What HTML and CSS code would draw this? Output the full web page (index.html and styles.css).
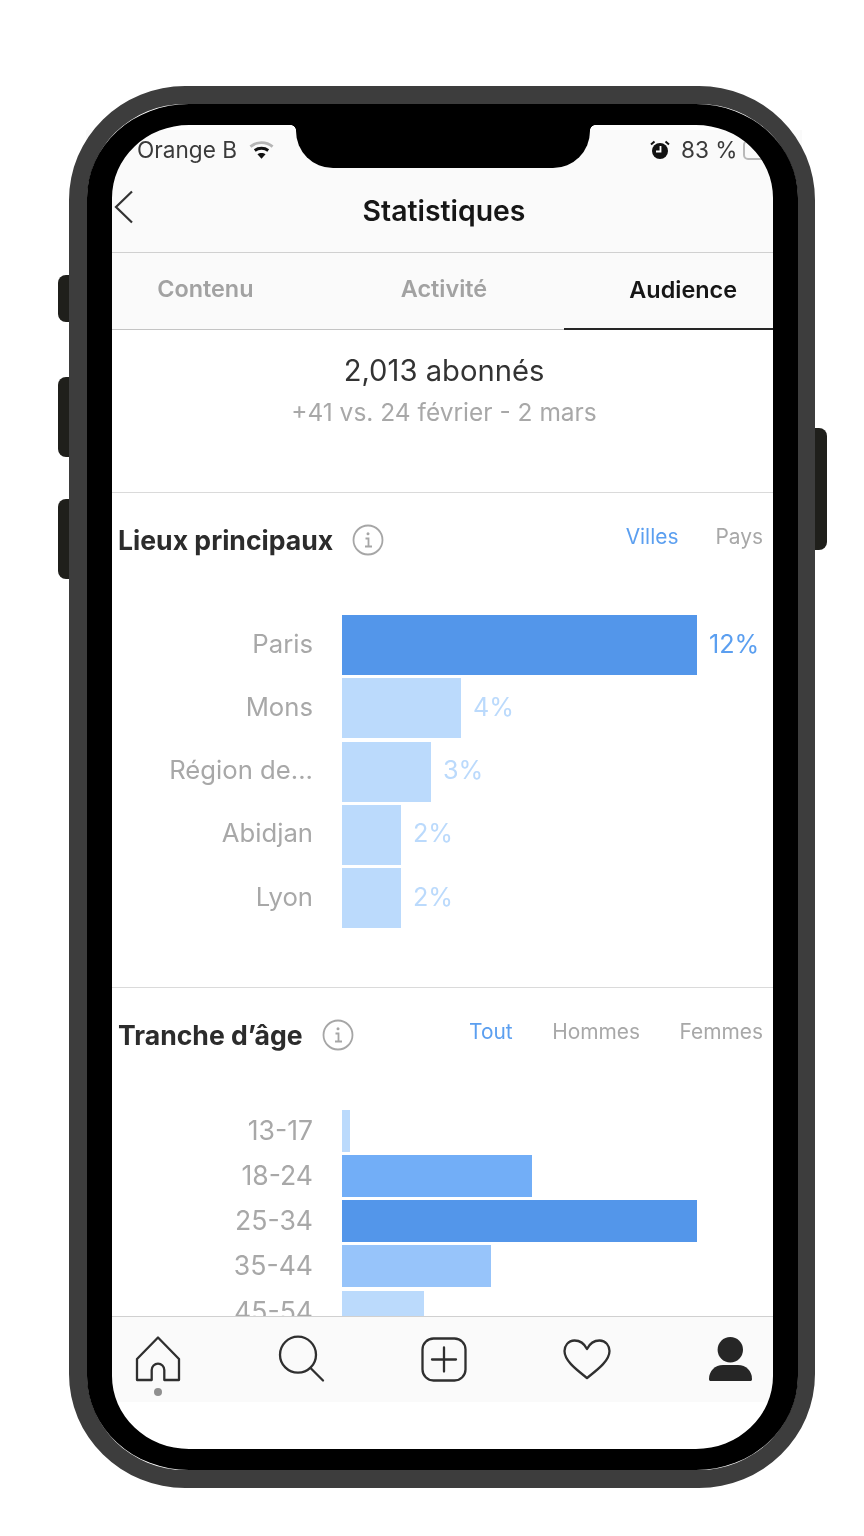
FILE: index.html
```html
<!DOCTYPE html>
<html lang="fr">
<head>
<meta charset="utf-8">
<title>Statistiques</title>
<link rel="stylesheet" href="styles.css">
</head>
<body>
<div class="stage">
  <main class="shot">
    <div class="status">
      <span class="carrier">Orange B</span>
      <svg class="wifi" viewBox="0 0 26 20"><path class="wifi-off" d="M1.500 6.500C8 1 18 1 24.500 6.500"/><path class="wifi-on" d="M6 10.500C10 7.500 16 7.500 20 10.500"/><path class="wifi-dot" d="M13 19L8.800 14.500C11 12.700 15 12.700 17.200 14.500Z"/></svg>
      <span class="status-gap"></span>
      <svg class="alarm" viewBox="0 0 20 20"><path class="alarm-ear" d="M1 4.500L4.500 1.500M19 4.500L15.500 1.500"/><circle cx="10" cy="11" r="8"/><path class="alarm-hand" d="M10.500 6V11.500H6"/></svg>
      <span class="battery-text">83 %</span>
      <span class="battery"></span>
    </div>
    <header class="nav">
      <svg class="back" viewBox="0 0 20 34"><path d="M18 1.500L2 17L18 32.500"/></svg>
      <h1 class="title">Statistiques</h1>
    </header>
    <nav class="tabs">
      <span class="tab">Contenu</span>
      <span class="tab">Activité</span>
      <span class="tab tab-active">Audience</span>
    </nav>
    <div class="scroll">
      <section class="summary">
        <p class="summary-main">2,013 abonnés</p>
        <p class="summary-sub">+41 vs. 24 février - 2 mars</p>
      </section>
      <section class="block block-places">
        <div class="block-head">
          <h2 class="block-title">Lieux principaux</h2>
          <svg class="info" viewBox="0 0 32 32"><circle cx="16" cy="16" r="14.500"/><path d="M13.500 14.500H16.500V22.500M13 22.500H20"/><circle class="info-dot" cx="16" cy="9.800" r="1.500"/></svg>
          <div class="filters">
            <span class="filter filter-on">Villes</span>
            <span class="filter">Pays</span>
          </div>
        </div>
        <div class="chart chart-places">
          <div class="row"><span class="label">Paris</span><span class="bar c-dark" style="width:355px"></span><span class="value v-dark">12%</span></div>
          <div class="row"><span class="label">Mons</span><span class="bar c-light" style="width:119px"></span><span class="value">4%</span></div>
          <div class="row"><span class="label">Région de...</span><span class="bar c-light" style="width:89px"></span><span class="value">3%</span></div>
          <div class="row"><span class="label">Abidjan</span><span class="bar c-light" style="width:59px"></span><span class="value">2%</span></div>
          <div class="row"><span class="label">Lyon</span><span class="bar c-light" style="width:59px"></span><span class="value">2%</span></div>
        </div>
      </section>
      <section class="block block-age">
        <div class="block-head">
          <h2 class="block-title">Tranche d’âge</h2>
          <svg class="info" viewBox="0 0 32 32"><circle cx="16" cy="16" r="14.500"/><path d="M13.500 14.500H16.500V22.500M13 22.500H20"/><circle class="info-dot" cx="16" cy="9.800" r="1.500"/></svg>
          <div class="filters filters-wide">
            <span class="filter filter-on">Tout</span>
            <span class="filter">Hommes</span>
            <span class="filter">Femmes</span>
          </div>
        </div>
        <div class="chart chart-age">
          <div class="row"><span class="label">13-17</span><span class="bar c-light" style="width:8px"></span></div>
          <div class="row"><span class="label">18-24</span><span class="bar c-mid" style="width:190px"></span></div>
          <div class="row"><span class="label">25-34</span><span class="bar c-dark" style="width:355px"></span></div>
          <div class="row"><span class="label">35-44</span><span class="bar c-soft" style="width:149px"></span></div>
          <div class="row"><span class="label">45-54</span><span class="bar c-light" style="width:82px"></span></div>
        </div>
      </section>
    </div>
    <footer class="tabbar">
      <div class="tabbar-item">
        <svg class="tabicon" viewBox="0 0 50 50"><path d="M4 46V25L25 3.500L46 25V46H31.300V36A6.300 6.300 0 0 0 18.700 36V46Z"/></svg>
        <span class="home-dot"></span>
      </div>
      <div class="tabbar-item">
        <svg class="tabicon" viewBox="0 0 50 50"><circle cx="22" cy="20.700" r="18"/><path d="M34.500 34L47 46.500"/></svg>
      </div>
      <div class="tabbar-item">
        <svg class="tabicon" viewBox="0 0 50 50"><rect x="3.500" y="4.500" width="43" height="42" rx="11"/><path d="M25 13.500V37.500M13 25.500H37"/></svg>
      </div>
      <div class="tabbar-item">
        <svg class="tabicon" viewBox="0 0 50 50"><path d="M25 15C22 9 17 6.500 12.500 6.500C6 6.500 2.500 12 2.500 17C2.500 27 15 36 25 44C35 36 47.500 27 47.500 17C47.500 12 44 6.500 37.500 6.500C33 6.500 28 9 25 15Z"/></svg>
      </div>
      <div class="tabbar-item">
        <svg class="tabicon tabicon-solid" viewBox="0 0 50 50"><circle cx="25.300" cy="15.700" r="12.700"/><path d="M4 45C4 37 10 31 18 31H33C41 31 47 37 47 45C47 46.500 46.500 47 45 47H6C4.500 47 4 46.500 4 45Z"/></svg>
      </div>
    </footer>
  </main>
  <span class="key key-l1"></span>
  <span class="key key-l2"></span>
  <span class="key key-l3"></span>
  <span class="key key-r"></span>
  <div class="frame">
    <div class="bezel"></div>
    <div class="notch"></div>
  </div>
</div>
</body>
</html>
```

FILE: styles.css
```css
* { box-sizing: border-box; }
html, body { margin: 0; padding: 0; background: #fff; }
body { font-family: Inter, "Liberation Sans", sans-serif; }
h1, h2, p { margin: 0; }

.stage { position: relative; width: 864px; height: 1536px; overflow: hidden; padding: 130px 0 0 86px; }

/* app screenshot */
.shot { width: 716px; height: 1272px; background: #fafafa; display: flex; flex-direction: column; filter: blur(0.35px); }

.status { height: 40px; flex: none; display: flex; align-items: center; padding-left: 51px; font-size: 22.600px; color: #3a3a3a; }
.carrier { padding-bottom: 2px; }
.wifi { width: 25px; height: 20px; margin-left: 12px; }
.wifi-off, .wifi-on { fill: none; stroke-width: 3px; }
.wifi-off { stroke: #b5b5b5; }
.wifi-on { stroke: #111; }
.wifi-dot { fill: #111; }
.status-gap { flex: 1; }
.alarm { width: 20px; height: 20px; }
.alarm circle { fill: #111; }
.alarm-ear { fill: none; stroke: #111; stroke-width: 2px; }
.alarm-hand { fill: none; stroke: #fff; stroke-width: 1.800px; }
.battery-text { margin-left: 11px; width: 54px; padding-bottom: 2px; white-space: nowrap; }
.battery { width: 40px; height: 20px; margin-left: 8px; margin-right: 19px; border: 2px solid #b9b9b9; border-radius: 5px; }

.nav { height: 83px; flex: none; position: relative; display: flex; align-items: center; justify-content: center; border-bottom: 1px solid #d0d0d0; }
.title { font-size: 28.400px; font-weight: 600; color: #161616; line-height: 1; }
.back { position: absolute; left: 28px; top: 20px; width: 20px; height: 34px; fill: none; stroke: #333; stroke-width: 2.200px; }

.tabs { height: 77px; flex: none; display: grid; grid-template-columns: 1fr 1fr 1fr; border-bottom: 1px solid #c4c4c4; }
.tab { display: flex; align-items: center; justify-content: center; font-size: 23.400px; font-weight: 600; color: #a2a2a2; padding-bottom: 6px; }
.tab-active { color: #161616; border-bottom: 2px solid #262626; margin: 0 0 -1px 1px; padding-bottom: 2px; }

.scroll { flex: 1; min-height: 0; overflow: hidden; background: #fff; }

.summary { height: 163px; padding-top: 21px; text-align: center; border-bottom: 1px solid #dadada; }
.summary-main { font-size: 29.200px; line-height: 40px; color: #333; }
.summary-sub { font-size: 24.500px; line-height: 30px; margin-top: 6px; color: #a8a8a8; }

.block { padding: 0 39px 0 32px; }
.block-places { height: 495px; border-bottom: 1px solid #dadada; padding-top: 27px; }
.block-age { padding-top: 27px; }
.block-head { height: 40px; display: flex; align-items: center; }
.block-title { font-size: 26.600px; font-weight: 700; color: #2c2c2c; line-height: 1; }
.info { width: 32px; height: 32px; margin-left: 19px; margin-top: -1px; fill: none; stroke: #a6a6a6; stroke-width: 1.800px; }
.info-dot { fill: #a6a6a6; stroke: none; }
.filters { margin-left: auto; display: flex; gap: 37px; margin-top: -7px; }
.filters-wide { gap: 39.500px; }
.filter { font-size: 20.900px; color: #a8a8a8; }
.filter-on { color: #5b9ff0; }

.chart-places { margin-top: 55px; display: flex; flex-direction: column; gap: 3.250px; }
.chart-places .row { height: 60px; }
.chart-age { margin-top: 55px; display: flex; flex-direction: column; gap: 3.150px; }
.chart-age .row { height: 42px; }
.chart-age .label { font-size: 26.600px; padding-bottom: 2px; }
.row { display: flex; align-items: center; }
.label { width: 195px; margin-right: 29px; padding-bottom: 4px; text-align: right; font-size: 25.700px; color: #a8a8a8; white-space: nowrap; }
.bar { height: 100%; flex: none; }
.value { margin-left: 12px; padding-bottom: 3px; font-size: 25.200px; color: #bbdafc; }
.v-dark { color: #5b9ff0; }
.c-dark { background: #5396ea; }
.c-mid { background: #72aef7; }
.c-soft { background: #97c4fa; }
.c-light { background: #bbdafc; }

.tabbar { height: 86px; flex: none; display: grid; grid-template-columns: repeat(5, 1fr); border-top: 1px solid #d0d0d0; padding-top: 17px; }
.tabbar-item { display: flex; flex-direction: column; align-items: center; }
.tabicon { width: 50px; height: 50px; fill: none; stroke: #2f2f2f; stroke-width: 2.300px; stroke-linejoin: round; stroke-linecap: round; }
.tabicon-solid { fill: #262626; stroke: none; }
.home-dot { width: 8px; height: 8px; margin-top: 4px; border-radius: 50%; background: #8f8f8f; }

/* phone hardware, over the screenshot */
.frame { position: absolute; left: 69px; top: 86px; width: 746px; height: 1402px; border-style: solid; border-color: #3d3d3d; border-width: 18px 17px 18px 18px; border-radius: 116px / 114px; }
.bezel { width: 100%; height: 100%; border-style: solid; border-color: #000; border-width: 21px 25px; border-radius: 102px / 94px; }
.notch { position: absolute; left: 209px; top: 21px; width: 294px; height: 43px; background: #000; border-radius: 0 0 37px 37px; }
.notch::before, .notch::after { content: ""; position: absolute; top: 0; width: 5px; height: 5px; }
.notch::before { left: -5px; background: radial-gradient(circle at 0 100%, transparent 4.500px, #000 5px); }
.notch::after { right: -5px; background: radial-gradient(circle at 100% 100%, transparent 4.500px, #000 5px); }
.key { position: absolute; background: #1f1f1b; }
.key-l1 { left: 58px; top: 275px; width: 12px; height: 47px; border-radius: 8px 0 0 8px; }
.key-l2 { left: 58px; top: 377px; width: 12px; height: 80px; border-radius: 8px 0 0 8px; }
.key-l3 { left: 58px; top: 499px; width: 12px; height: 80px; border-radius: 8px 0 0 8px; }
.key-r { left: 814px; top: 428px; width: 13px; height: 122px; border-radius: 0 8px 8px 0; }
```
